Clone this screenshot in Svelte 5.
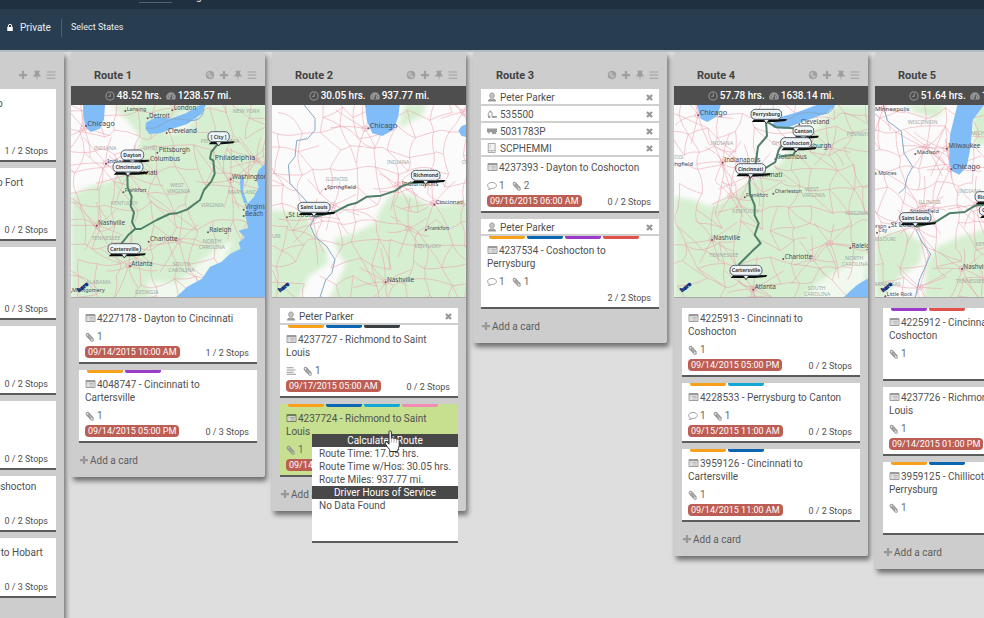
<script>
  const orange = '#f9a01b', blue = '#0a66b0', cyan = '#13a8d4', purple = '#9a3bc9';
  const red = '#e2504a', black = '#3c3f41', pink = '#f28cb5';

  const roadsFor = (map) => {
    let seed = map.seed;
    const rnd = () => {
      seed = (seed * 16807) % 2147483647;
      return seed / 2147483647;
    };
    const [ox, oy] = map.origin;
    const step = 56;
    const grid = [];
    for (let r = 0; r < 13; r++) {
      grid.push([]);
      for (let c = 0; c < 13; c++) {
        grid[r].push([ox - 30 + c * step + rnd() * 40 - 20, oy - 30 + r * step + rnd() * 40 - 20]);
      }
    }
    const link = (a, b) => {
      const mx = (a[0] + b[0]) / 2 + rnd() * 24 - 12;
      const my = (a[1] + b[1]) / 2 + rnd() * 24 - 12;
      return `M${a[0].toFixed(0)} ${a[1].toFixed(0)}Q${mx.toFixed(0)} ${my.toFixed(0)} ${b[0].toFixed(0)} ${b[1].toFixed(0)}`;
    };
    let d = '';
    for (let r = 0; r < 12; r++) {
      for (let c = 0; c < 12; c++) {
        if (rnd() < 0.8) d += link(grid[r][c], grid[r][c + 1]);
        if (rnd() < 0.75) d += link(grid[r][c], grid[r + 1][c]);
        if (rnd() < 0.25) d += link(grid[r][c], grid[r + 1][c + 1]);
      }
    }
    for (const hub of map.hubs) {
      for (let i = 0; i < 7; i++) {
        const a = (i / 7) * 6.283 + rnd() * 0.5;
        const len = 60 + rnd() * 50;
        d += link(hub, [hub[0] + Math.cos(a) * len, hub[1] + Math.sin(a) * len]);
      }
      d += `M${hub[0] - 9} ${hub[1]}a9 8 0 1 0 18 0a9 8 0 1 0 -18 0`;
    }
    return d;
  };

  const east = {
    origin: [213, 15], seed: 4711,
    land: ['M330 15H800V600H213V290L260 262 330 245 400 190 420 110 380 60Z'],
    bare: ['M440 540 530 550 640 450 700 420 660 520 520 600 450 600Z', 'M540 40 600 30 560 90 500 110Z'],
    water: [
      'M249 15H315L312 58 300 86 272 96 256 80 250 50Z',
      'M438 68 470 50 512 56 560 38 600 15H618L604 42 562 72 512 88 480 100 448 102 436 86Z',
      'M800 186 776 210 768 232 776 262 762 290 742 312 736 345 744 384 716 392 734 412 716 428 722 446 690 462 664 486 630 500 606 536 562 560 528 592H800Z',
      'M726 222 732 244 728 272 738 296 744 312 732 308 722 276 720 244Z'
    ],
    river: 'M440 84Q465 90 490 70T560 60T612 28',
    hubs: [[252, 84], [318, 190], [386, 222], [536, 424], [386, 496], [692, 240], [770, 182], [292, 376]],
    cities: [
      [521, 30, 'London'], [380, 32, 'Lansing', 16], [447, 54, 'Detroit'], [262, 77, 'Chicago', 22], [504, 98, 'Cleveland'],
      [476, 157, 'Pittsburgh'], [450, 182, 'Columbus'], [644, 181, 'Philadelphia', 21], [322, 190, 'Indianapolis', 18], [384, 225, 'Cincinnati'],
      [696, 237, 'Washington'], [374, 276, 'Frankfort', 15], [735, 328, 'Virginia'], [735, 347, 'Beach'], [294, 376, 'Nashville'],
      [628, 396, 'Raleigh'], [450, 424, 'Charlotte'], [394, 498, 'Atlanta'], [216, 575, 'Montgomery', 16]
    ],
    states: [
      [698, 38, 'NEW YORK'], [602, 128, 'PENNSYLVANIA'], [282, 151, 'INDIANA'], [430, 151, 'OHIO'], [684, 283, 'MARYLAND'],
      [510, 261, 'WEST'], [500, 280, 'VIRGINIA'], [332, 315, 'KENTUCKY'], [602, 321, 'VIRGINIA'], [275, 420, 'TENNESSEE'],
      [608, 428, 'NORTH'], [596, 446, 'CAROLINA'], [518, 498, 'SOUTH'], [505, 517, 'CAROLINA'], [258, 552, 'ALABAMA'], [405, 582, 'GEORGIA']
    ],
    route: 'M382 222 383 262 395 290 392 318 402 338 396 366 406 386 422 387 470 360 508 342 530 340 562 328 600 300 612 270 634 244 644 222 640 182 630 176 634 156 655 130M406 386 384 406 360 436',
    pins: [[397, 165, 68, 'Dayton'], [384, 201, 90, 'Cincinnati'], [656, 110, 64, '[ City ]'], [373, 446, 98, 'Cartersville']]
  };

  const midwest = {
    origin: [21, 165], seed: 90210,
    land: [
      'M610 455 500 470 440 435 380 430 345 480 330 520 262 552 205 568 220 612 244 642 215 700 190 750H610Z',
      'M15 480 130 490 140 540 185 600 190 640 130 680 100 750H15Z',
      'M420 160H485L470 200 440 212 400 238Z'
    ],
    bare: [],
    water: ['M300 165H404L400 200 386 238 352 258 322 250 306 215Z', 'M606 222 590 228 580 242 590 258 606 262Z'],
    river: 'M118 165 150 205 150 240 128 266 95 272 90 320 70 345 75 400 130 460 150 500 136 528 150 560 186 590 210 630 200 670 182 690 165 741',
    hubs: [[300, 236], [398, 404], [145, 505], [505, 460], [430, 536], [362, 696], [205, 465], [595, 185]],
    cities: [
      [314, 234, 'Chicago', 22], [186, 417, 'Springfield', 17], [410, 409, 'Indianapolis', 19], [512, 463, 'Cincinnati', 18],
      [487, 539, 'Frankfort', 15], [366, 696, 'Nashville'], [70, 501, 'St Louis', 21]
    ],
    states: [[366, 343, 'INDIANA'], [182, 394, 'ILLINOIS'], [448, 595, 'KENTUCKY'], [590, 343, 'OHIO'], [-30, 563, 'MISSOURI']],
    route: 'M150 500 207 487 250 465 276 458 306 440 348 437 392 422 412 408 436 400 482 396',
    pins: [[147, 472, 96, 'Saint Louis'], [482, 376, 86, 'Richmond']]
  };

  const ohio = {
    origin: [12, 165], seed: 3301,
    land: ['M12 440 70 450 120 470 180 440 230 400 330 340 400 240 500 165H600V750H12Z'],
    bare: ['M400 750 440 700 520 650 594 610 580 700 520 745Z', 'M420 200 480 190 420 260 390 260Z'],
    water: ['M80 165H152L142 198 112 216 92 206Z', 'M304 226 330 202 384 186 440 165H496L470 190 402 214 345 236 312 234Z', 'M600 682 562 704 540 724 518 745H600Z'],
    river: 'M310 216Q340 220 370 200T440 190T492 168',
    hubs: [[84, 196], [158, 337], [242, 376], [182, 438], [428, 626], [250, 718], [126, 569], [478, 292], [480, 580]],
    cities: [
      [89, 195, 'Chicago', 22], [392, 222, 'Cleveland'], [390, 294, 'Pittsburgh'], [162, 337, 'Indianapolis', 19], [320, 327, 'Columbus'],
      [-18, 347, 'Springfield', 17], [244, 381, 'Cincinnati', 20], [314, 430, 'Charleston', 16], [228, 441, 'Frankfort', 15], [130, 569, 'Nashville'],
      [344, 626, 'Charlotte'], [545, 593, 'Raleigh'], [254, 718, 'Atlanta']
    ],
    states: [
      [530, 257, 'PENNSYLVANIA'], [122, 285, 'INDIANA'], [305, 285, 'OHIO'], [-26, 327, 'ILLINOIS'], [405, 423, 'WEST'], [396, 442, 'VIRGINIA'],
      [187, 488, 'KENTUCKY'], [525, 496, 'VIRGINIA'], [118, 622, 'TENNESSEE'], [525, 630, 'NORTH'], [515, 648, 'CAROLINA'], [413, 720, 'SOUTH'], [402, 738, 'CAROLINA']
    ],
    route: 'M288 215 291 258 264 290 258 335 243 370 238 396 240 432 254 466 254 496 266 520 254 555 272 580 246 604 205 645M290 215 320 232 398 236M285 355 316 336 326 300 336 285M378 300 370 314 326 320',
    pins: [[289, 193, 92, 'Perrysburg'], [400, 243, 62, 'Canton'], [378, 278, 92, 'Coshocton'], [242, 356, 90, 'Cincinnati'], [228, 661, 96, 'Cartersville']]
  };

  const west = {
    origin: [615, 165], seed: 777,
    land: [
      'M615 560 700 540 760 580 750 640 690 680 640 745H615Z',
      'M770 640 800 590 870 560 940 540 1200 500V750H760Z',
      'M920 165H1200V260L960 280 915 290 905 215Z',
      'M700 165 830 165 800 205 740 190Z'
    ],
    bare: [],
    water: ['M862 165H942L908 210 902 290 890 350 868 374 846 364 837 330 840 255Z'],
    river: 'M640 165 652 212 694 244 702 310 728 350 712 380 704 415 686 430M738 540 756 576 782 612 766 650 748 690 736 741',
    hubs: [[840, 357], [828, 296], [740, 530], [758, 468], [750, 711], [876, 656], [920, 464], [640, 176], [770, 290]],
    cities: [
      [615, 182, 'Minneapolis', 18], [835, 295, 'Milwaukee'], [740, 311, 'Madison', 17], [848, 357, 'Chicago', 22], [592, 375, 'Des Moines', 16],
      [720, 489, 'Springfield', 17], [586, 533, 'Jefferson', 15], [625, 547, 'City', 15], [662, 531, 'St Louis', 21], [880, 656, 'Nashville'], [650, 738, 'Little Rock', 16]
    ],
    states: [[713, 221, 'WISCONSIN'], [903, 256, 'MICHIGAN'], [746, 463, 'ILLINOIS'], [867, 428, 'INDIANA'], [600, 573, 'MISSOURI'], [858, 700, 'TENNESSEE'], [612, 708, 'ARKANSAS'], [917, 588, 'KENTUCKY']],
    route: 'M738 530 795 517 838 490 884 486 915 467 960 458',
    pins: [[736, 503, 94, 'Saint Louis'], [960, 440, 90, 'Richmond'], [974, 481, 92, 'Cincinnati']]
  };

  const driver = { kind: 'driver', text: 'Peter Parker' };

  const lists = [
    {
      name: 'Unassigned', plain: true,
      cards: [
        { labels: [orange], title: '4225917 - Coshocton to Jeffersonville', stops: '1 / 2 Stops' },
        { labels: [orange, blue, cyan], title: '4227180 - Coshocton to Fort Jefferson', stops: '0 / 2 Stops' },
        { labels: [orange], title: '4237531 - Dayton to Jeffersonville', stops: '0 / 3 Stops' },
        { title: '4237533 - Dayton to Jeffersonville', stops: '0 / 2 Stops' },
        { title: '4237535 - Dayton to Jeffersonville', stops: '0 / 2 Stops' },
        { title: '4237390 - Dayton to Coshocton', stops: '0 / 2 Stops' },
        { labels: [orange, blue, red], title: '4228541 - Youngstown to Hobart', stops: '0 / 3 Stops' }
      ]
    },
    {
      name: 'Route 1', hours: '48.52 hrs.', miles: '1238.57 mi.', map: east,
      cards: [
        { title: '4227178 - Dayton to Cincinnati', files: 1, due: '09/14/2015 10:00 AM', stops: '1 / 2 Stops' },
        { labels: [orange, purple], title: '4048747 - Cincinnati to Cartersville', files: 1, due: '09/14/2015 05:00 PM', stops: '0 / 3 Stops' }
      ]
    },
    {
      name: 'Route 2', hours: '30.05 hrs.', miles: '937.77 mi.', map: midwest,
      cards: [
        { tags: [driver], labels: [orange, blue, black], title: '4237727 - Richmond to Saint Louis', notes: true, files: 1, due: '09/17/2015 05:00 AM', stops: '0 / 2 Stops' },
        { labels: [orange, blue, cyan, pink], title: '4237724 - Richmond to Saint Louis', files: 1, due: '09/14/2015 05:00 AM', stops: '0 / 2 Stops', active: true }
      ]
    },
    {
      name: 'Route 3',
      cards: [
        {
          tags: [driver, { kind: 'truck', text: '535500' }, { kind: 'trailer', text: '5031783P' }, { kind: 'phone', text: 'SCPHEMMI' }],
          title: '4237393 - Dayton to Coshocton', comments: 1, files: 2, due: '09/16/2015 06:00 AM', stops: '0 / 2 Stops'
        },
        { tags: [driver], labels: [orange, blue, purple, red], title: '4237534 - Coshocton to Perrysburg', comments: 1, files: 1, stops: '2 / 2 Stops' }
      ]
    },
    {
      name: 'Route 4', hours: '57.78 hrs.', miles: '1638.14 mi.', map: ohio,
      cards: [
        { title: '4225913 - Cincinnati to Coshocton', files: 1, due: '09/14/2015 05:00 PM', stops: '0 / 2 Stops' },
        { labels: [orange, cyan], title: '4228533 - Perrysburg to Canton', comments: 1, files: 1, due: '09/15/2015 11:00 AM', stops: '0 / 2 Stops' },
        { labels: [orange, blue], title: '3959126 - Cincinnati to Cartersville', files: 1, due: '09/14/2015 11:00 AM', stops: '0 / 2 Stops' }
      ]
    },
    {
      name: 'Route 5', hours: '51.64 hrs.', miles: '1307.22 mi.', map: west,
      cards: [
        { labels: [purple, red], title: '4225912 - Cincinnati to Coshocton', files: 1, stops: '0 / 2 Stops' },
        { title: '4237726 - Richmond to Saint Louis', files: 1, due: '09/14/2015 01:00 PM', stops: '0 / 2 Stops' },
        { labels: [orange, blue], title: '3959125 - Chillicothe to Perrysburg', files: 1, stops: '0 / 2 Stops' }
      ]
    }
  ];
</script>

{#snippet icon(kind)}
  <svg class="icon icon-{kind}" viewBox="0 0 16 16" aria-hidden="true">
    {#if kind === 'globe'}
      <circle cx="8" cy="8" r="6.200" fill="#b9b9b9" stroke="currentColor" stroke-width="1.600" />
      <path d="M7 2 13 3.500 14 7.500 11.500 9.500 9 7 8.500 4.500ZM2 8.500 4.500 9 7 12 6 14 3 12Z" fill="currentColor" />
    {:else if kind === 'plus'}
      <path d="M6.200 1.500h3.600v4.700h4.700v3.600H9.800v4.700H6.200V9.800H1.500V6.200h4.700z" fill="currentColor" />
    {:else if kind === 'pin'}
      <path d="M3.500 1h9v1.800h-1.400l.5 4.400c1.600.6 2.400 1.600 2.400 3H9l-.6 5h-.8l-.6-5H2c0-1.400.8-2.400 2.400-3l.5-4.400H3.500z" fill="currentColor" />
    {:else if kind === 'menu'}
      <path d="M1 2.200h14v1.700H1zM1 7.200h14v1.700H1zM1 12.200h14v1.700H1z" fill="currentColor" />
    {:else if kind === 'clock'}
      <circle cx="8" cy="8" r="6.500" fill="none" stroke="currentColor" stroke-width="1.600" />
      <path d="M8.500 4v4.500H5" fill="none" stroke="currentColor" stroke-width="1.600" />
    {:else if kind === 'gauge'}
      <path d="M8 2.200a7.500 7.500 0 0 0-6.600 11.300h13.200A7.500 7.500 0 0 0 8 2.200z" fill="currentColor" />
      <path d="M8 12 9.500 5.500M3 9.500h1.500M11.500 9.500H13M4.300 5.800l1 1M11.700 5.800l-1 1" stroke="#4e4e4e" stroke-width="1.400" fill="none" />
      <circle cx="8" cy="11.500" r="1.500" fill="#4e4e4e" />
    {:else if kind === 'card'}
      <path d="M.8 2.400h14.400v11.200H.8z" fill="#f1f1f1" stroke="currentColor" stroke-width="1.500" />
      <path d="M.8 2.400h14.400v2.800H.8z" fill="currentColor" />
      <path d="M3 7.200h1.600M6 7.200h7.200M3 9.300h1.600M6 9.300h7.200M3 11.400h1.600M6 11.400h7.200" stroke="currentColor" stroke-width="1" />
    {:else if kind === 'clip'}
      <path d="M13.500 11.500 6.300 3.300C5 1.800 3 2 2.200 3.200c-.7 1-.5 2 .3 3L10 14.300c1 1 2.300.7 2.900 0 .6-.8.5-1.700-.2-2.500L6.500 5.200c-.5-.5-1.200-.5-1.500 0-.4.4-.3.9.1 1.400L10 12" fill="none" stroke="currentColor" stroke-width="1.700" />
    {:else if kind === 'comment'}
      <path d="M8 2.300c-3.900 0-7 2.200-7 4.900 0 1.700 1.200 3.200 3.100 4-.2 1.100-.8 1.900-1.700 2.600 1.900-.2 3.200-.9 4.200-1.900.5.100.9.100 1.400.100 3.900 0 7-2.100 7-4.800S11.900 2.300 8 2.300z" fill="none" stroke="currentColor" stroke-width="1.500" />
    {:else if kind === 'notes'}
      <path d="M1 2h11v1.600H1zM1 5.500h14v1.600H1zM1 9h11v1.600H1zM1 12.500h15v1.600H1z" fill="currentColor" />
    {:else if kind === 'driver'}
      <path d="M8 1.500c2.300 0 3.700 1.600 3.700 4S10.200 10 8 10 4.300 7.900 4.300 5.500s1.400-4 3.700-4z" fill="#c4c4c4" stroke="currentColor" stroke-width="1.500" />
      <path d="M1.500 15c.2-2.800 1.800-4.200 4-4.800L8 12l2.500-1.800c2.200.6 3.800 2 4 4.800z" fill="currentColor" />
    {:else if kind === 'truck'}
      <path d="M2 11V6.500L4.500 5V3h1.200v2H8v7h7.500v1.300H8.500" fill="none" stroke="currentColor" stroke-width="1.500" />
      <circle cx="3.500" cy="12.500" r="2" fill="currentColor" /><circle cx="9.500" cy="12.500" r="1.700" fill="currentColor" />
    {:else if kind === 'trailer'}
      <path d="M0 4h16v6H0zM2 10h2v2H2zM8 10h6v1H8z" fill="currentColor" />
      <circle cx="9.500" cy="11.500" r="1.700" fill="currentColor" /><circle cx="13" cy="11.500" r="1.700" fill="currentColor" />
    {:else if kind === 'phone'}
      <path d="M2 .8h11v14.400H2z" fill="#f3f3f3" stroke="currentColor" stroke-width="1.300" />
      <path d="M4.200 3h1.600M4.200 5.500h1.600M4.200 8h1.600M2 12h11M6.500 13.600h2" stroke="currentColor" stroke-width="1" />
    {:else if kind === 'close'}
      <path d="m3.500 3.500 9 9m0-9-9 9" stroke="currentColor" stroke-width="4" />
    {:else if kind === 'lock'}
      <path d="M4.600 7V5a3.400 3.400 0 0 1 6.800 0v2" fill="none" stroke="currentColor" stroke-width="2" />
      <path d="M2.500 7h11v8h-11z" fill="currentColor" />
    {/if}
  </svg>
{/snippet}

{#snippet routeMap(map, name)}
  <svg class="map" viewBox="{map.origin[0]} {map.origin[1]} 582 576" role="img" aria-label="Map of {name}">
    <defs>
      <filter id="terrain-{map.seed}"><feGaussianBlur stdDeviation="8" /></filter>
    </defs>
    <rect x={map.origin[0]} y={map.origin[1]} width="582" height="576" fill="#fcfbfb" />
    <g filter="url(#terrain-{map.seed})">
      {#each map.land as d}<path {d} fill="#d6efd0" />{/each}
      {#each map.bare as d}<path {d} fill="#f1f9ee" />{/each}
    </g>
    <path d={roadsFor(map)} class="road" />
    {#each map.water as d}<path {d} fill="#80bcf8" />{/each}
    <path d={map.river} class="river" />
    {#each map.states as [x, y, text]}<text {x} {y} class="state">{text}</text>{/each}
    {#each map.cities as [x, y, text, size]}
      <circle cx={x - 4} cy={y + 1} r="3" fill="#7a4a5a" />
      <text {x} {y} class="city" font-size={size ?? 19}>{text}</text>
    {/each}
    <path d={map.route} class="route" />
    {#each map.pins as [x, y, w, text]}
      <path d="M{x - w / 2 + 10} {y + 15}h{w - 24}l30-1-4 6-34 3h{24 - w}z" fill="#0b0d0c" />
      <path d="M{x - 10} {y + 14}h20l-10 14z" fill="#e9eff2" stroke="#1d2225" stroke-width="2.500" />
      <rect x={x - w / 2} y={y - 15} width={w} height="30" rx="13" fill="#eef3f6" stroke="#56616a" stroke-width="3" />
      <text {x} y={y + 6} class="place">{text}</text>
    {/each}
    <text class="here" transform="translate({map.origin[0] + 24} {map.origin[1] + 562}) rotate(-38)">here</text>
  </svg>
{/snippet}

<div class="app">
  <header>
    <nav class="strip" aria-label="Primary"><span class="underline"></span><span class="cut">g</span></nav>
    <div class="tools">
      <button class="private">{@render icon('lock')}Private</button>
      <button class="states">Select States</button>
    </div>
  </header>

  <main>
    <div class="lists">
      {#each lists as list}
        <section class="list">
          <div class="head">
            <h2>{list.name}</h2>
            {#if !list.plain}<button aria-label="Show map">{@render icon('globe')}</button>{/if}
            <button aria-label="Add">{@render icon('plus')}</button>
            <button aria-label="Pin">{@render icon('pin')}</button>
            <button aria-label="Menu">{@render icon('menu')}</button>
          </div>
          {#if list.map}
            <div class="totals">{@render icon('clock')}<span>{list.hours}</span>{@render icon('gauge')}<span>{list.miles}</span></div>
            {@render routeMap(list.map, list.name)}
          {/if}
          <div class="cards" class:below={list.map}>
            {#each list.cards as card}
              <article class="card" class:active={card.active}>
                {#each card.tags ?? [] as tag}
                  <div class="tag">{@render icon(tag.kind)}<span>{tag.text}</span><button aria-label="Remove {tag.text}">{@render icon('close')}</button></div>
                {/each}
                <div class="body">
                  {#if card.labels}
                    <div class="labels">{#each card.labels as color}<i style="background:{color}"></i>{/each}</div>
                  {/if}
                  <h3>{@render icon('card')}{card.title}</h3>
                  <div class="meta">
                    {#if card.notes}<span>{@render icon('notes')}</span>{/if}
                    {#if card.comments}<span>{@render icon('comment')}{card.comments}</span>{/if}
                    {#if card.files}<span>{@render icon('clip')}{card.files}</span>{/if}
                  </div>
                  <div class="foot">
                    {#if card.due}<time>{card.due}</time>{/if}
                    <span class="stops">{card.stops}</span>
                  </div>
                </div>
                {#if card.active}
                  <div class="popup" role="tooltip">
                    <h4>Calculated Route</h4>
                    <p>Route Time: 17.05 hrs.</p>
                    <p>Route Time w/Hos: 30.05 hrs.</p>
                    <p>Route Miles: 937.77 mi.</p>
                    <h4>Driver Hours of Service</h4>
                    <p>No Data Found</p>
                  </div>
                  <svg class="hand" viewBox="0 0 17 23" aria-hidden="true">
                    <path d="M5 1.800C5 .4 7.400.4 7.400 1.800V8.500c.3-1.200 2.500-1 2.600.3.500-1 2.500-.7 2.600.6.600-.8 2.600-.4 2.600 1.100v4.700c0 2.400-1.500 3.500-1.500 6.300H6.200c-.4-2.400-3.200-4.600-4.800-7.600-.9-1.700.9-2.700 2.200-1.200L5 14.200z" fill="#fff" stroke="#333" stroke-width="1" />
                    <path d="M7.400 8.500v4M10 9v3.500M12.600 9.800v3" stroke="#999" stroke-width=".7" />
                  </svg>
                {/if}
              </article>
            {/each}
            <button class="add">{@render icon('plus')}Add a card</button>
          </div>
        </section>
      {/each}
    </div>
  </main>
</div>

<style>
  :global(body) { margin: 0; }
  .app {
    display: flex;
    flex-direction: column;
    height: 100vh;
    overflow: hidden;
    background: #dedede;
    color: #505050;
    font: 10px/13px Roboto, "Liberation Sans", sans-serif;
  }
  button {
    display: inline-flex;
    align-items: center;
    padding: 0;
    border: 0;
    background: none;
    color: inherit;
    font: inherit;
    cursor: pointer;
  }
  h2, h3, h4, p { margin: 0; font: inherit; }
  .icon { width: 10px; height: 10px; flex: none; color: #989898; }

  header { flex: none; background: #293d50; border-bottom: 2px solid #b4bcc6; color: #e8edf1; }
  .strip { display: flex; gap: 24px; height: 9px; padding-left: 139px; overflow: hidden; background: #1f3041; }
  .underline { width: 33px; height: 2px; border-bottom: 1px solid #53626f; }
  .cut { margin-top: -10px; }
  .tools { display: flex; align-items: center; height: 37px; padding: 0 6px 4px; }
  .private { gap: 6px; height: 18px; padding-right: 10px; border-right: 1px solid #4c6073; }
  .private .icon { width: 8px; height: 9px; color: #fff; }
  .states { padding-left: 9px; font-size: 9px; }

  main { flex: 1; min-height: 0; overflow: hidden; }
  .lists { display: flex; align-items: flex-start; gap: 7px; margin-left: -130px; }
  .list {
    flex: 0 0 194px;
    border-radius: 2px;
    background: #cdcdcd;
    box-shadow: 2px 4px 5px rgba(0, 0, 0, .5);
  }
  .head { display: flex; align-items: center; gap: 4px; height: 22px; padding: 12px 8px 0 23px; }
  .head h2 { flex: 1; font-size: 11px; font-weight: 700; color: #424242; }
  .head .icon { color: #9f9f9f; }
  .totals {
    display: flex;
    align-items: center;
    justify-content: center;
    gap: 2px;
    height: 19px;
    background: #4e4e4e;
    color: #fff;
    font-weight: 500;
  }
  .totals .icon-gauge { margin-left: 2px; }

  .map { display: block; width: 100%; border-bottom: 1px solid #a9a9a9; }
  .road { fill: none; stroke: #eb9dac; stroke-width: 2; opacity: .8; }
  .river { fill: none; stroke: #84a9cc; stroke-width: 3; stroke-linejoin: round; }
  .city { font-family: "Noto Sans", sans-serif; fill: #454b57; }
  .state { font-family: "Noto Sans", sans-serif; font-size: 16px; fill: #a3a8a3; }
  .route { fill: none; stroke: #4f7f68; stroke-width: 6; stroke-linejoin: round; }
  .place { font-family: "Noto Sans", sans-serif; font-size: 15px; font-weight: 700; text-anchor: middle; fill: #3a4248; }
  .here { font-family: "Noto Sans", sans-serif; font-size: 16px; font-weight: 700; fill: #14317c; stroke: #14317c; stroke-width: 2; }

  .cards { display: flex; flex-direction: column; align-items: stretch; gap: 6px; padding: 3px 8px 0; }
  .cards.below { padding-top: 10px; }
  .card { position: relative; background: #fff; border-bottom: 2px solid #5c5c5c; box-sizing: border-box; }
  .tag {
    display: flex;
    align-items: center;
    gap: 3px;
    box-sizing: border-box;
    height: 17px;
    padding: 1px 5px 0 6px;
    border-bottom: 2px solid #cfcfcf;
  }
  .tag span { flex: 1; }
  .tag .icon-close { width: 9px; height: 9px; }
  .body { padding: 4px 8px 4px 6px; }
  .body:has(.labels) { padding-top: 0; }
  .labels { display: flex; gap: 2px; padding: 0 2px 5px; }
  .labels i { width: 36px; height: 3px; border-radius: 0 0 2px 2px; }
  .icon-card { width: 11px; margin-right: 1px; vertical-align: -1px; }
  .meta { display: flex; gap: 7px; height: 13px; padding: 5px 0 3px; color: #6a6a6a; }
  .meta span { display: flex; align-items: center; gap: 2px; }
  .foot { display: flex; align-items: center; height: 12px; font-size: 9px; line-height: 12px; }
  time { padding: 0 3px; border-radius: 4px; background: #bd5e55; color: #fff; }
  .stops { margin-left: auto; padding-top: 2px; }
  .add { gap: 1px; height: 34px; margin-top: -6px; color: #5c5c5c; }

  .active { background: #c6e08f; }
  .active .icon-card { color: #6d7a58; }
  .popup {
    position: absolute;
    z-index: 2;
    top: 30px;
    left: 32px;
    right: 0;
    min-height: 107px;
    background: #fff;
    border-bottom: 2px solid #5c5c5c;
  }
  .popup h4 { background: #484848; color: #fff; text-align: center; }
  .popup p { padding-left: 7px; white-space: nowrap; }
  .hand { position: absolute; z-index: 3; top: 26px; left: 104px; width: 17px; height: 23px; }
</style>
